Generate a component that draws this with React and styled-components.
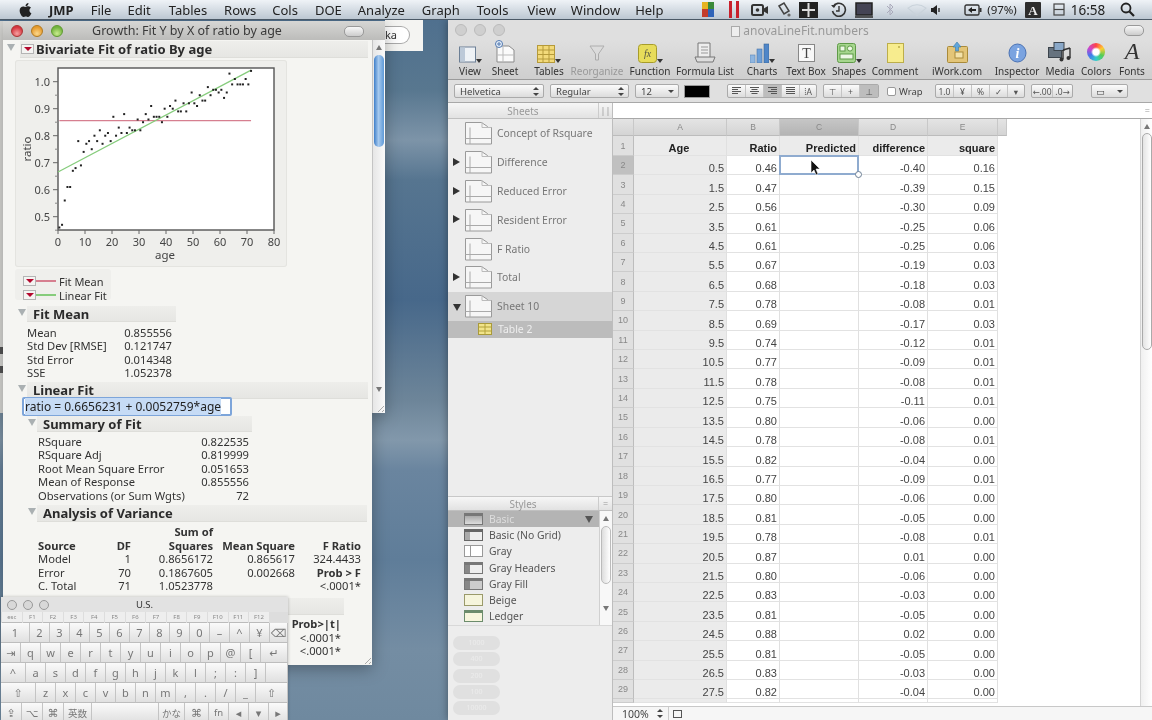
import React from "react";
import styled, { createGlobalStyle } from "styled-components";
import { FaApple } from "react-icons/fa";

const GlobalStyle = createGlobalStyle`
  html, body {
    margin: 0;
    width: 1152px;
    height: 720px;
    overflow: hidden;
    background: #5d7a96;
  }
`;

const sans = `"Noto Sans", "DejaVu Sans", "Noto Sans CJK JP", sans-serif`;
const helv = `"Liberation Sans", Arial, sans-serif`;

// ---------- data ----------
const ratios = [
  0.46, 0.47, 0.56, 0.61, 0.61, 0.67, 0.68, 0.78, 0.69, 0.74, 0.77, 0.78, 0.75, 0.8, 0.78, 0.82,
  0.77, 0.8, 0.81, 0.78, 0.87, 0.8, 0.83, 0.81, 0.88, 0.81, 0.83, 0.82, 0.82, 0.86, 0.82, 0.85,
  0.88, 0.86, 0.91, 0.87, 0.87, 0.87, 0.85, 0.9, 0.87, 0.91, 0.9, 0.93, 0.89, 0.89, 0.92, 0.89,
  0.92, 0.96, 0.92, 0.91, 0.95, 0.93, 0.93, 0.98, 0.95, 0.97, 0.97, 0.96, 0.97, 0.94, 0.96, 1.03,
  0.99, 1.01, 0.99, 0.99, 0.99, 1.01, 0.99, 1.04,
];
const differences = [
  "-0.40", "-0.39", "-0.30", "-0.25", "-0.25", "-0.19", "-0.18", "-0.08", "-0.17", "-0.12", "-0.09",
  "-0.08", "-0.11", "-0.06", "-0.08", "-0.04", "-0.09", "-0.06", "-0.05", "-0.08", "0.01", "-0.06",
  "-0.03", "-0.05", "0.02", "-0.05", "-0.03", "-0.04",
];
const squares = [
  "0.16", "0.15", "0.09", "0.06", "0.06", "0.03", "0.03", "0.01", "0.03", "0.01", "0.01", "0.01",
  "0.01", "0.00", "0.01", "0.00", "0.01", "0.00", "0.00", "0.01", "0.00", "0.00", "0.00", "0.00",
  "0.00", "0.00", "0.00", "0.00",
];
const menus = [
  ["File", 16],
  ["Edit", 18],
  ["Tables", 17],
  ["Rows", 16],
  ["Cols", 17],
  ["DOE", 16],
  ["Analyze", 17],
  ["Graph", 17],
  ["Tools", 19],
  ["View", 15],
  ["Window", 15],
  ["Help", 0],
];

// ---------- page ----------
const Desktop = styled.div`
  position: relative;
  width: 1152px;
  height: 720px;
  overflow: hidden;
  filter: blur(0.45px);
  background: linear-gradient(
    180deg,
    #4d6e8e 0,
    #58778f 90px,
    #7d94a8 140px,
    #567590 180px,
    #47688a 300px,
    #6d8599 400px,
    #8298ab 440px,
    #6a859f 470px,
    #5f7d99 560px,
    #748da3 650px,
    #6f899f 720px
  );
`;

const MenuBar = styled.div`
  position: relative;
  z-index: 9;
  height: 20px;
  display: flex;
  align-items: center;
  padding-left: 18px;
  box-sizing: border-box;
  background: linear-gradient(180deg, #eff3f7, #bcc7d2);
  border-bottom: 1px solid #4a5866;
  font: 13px ${sans};
  color: #222;
`;
const AppleMark = styled(FaApple)`
  width: 15px;
  height: 16px;
  color: #222;
  margin-right: 16px;
`;
const AppName = styled.span`
  font-weight: 700;
  margin-right: 17px;
`;
const MenuItem = styled.span`
  margin-right: ${(p) => p.$gap}px;
`;
const StatusArea = styled.div`
  position: absolute;
  left: 695px;
  top: 0;
  height: 19px;
  display: flex;
  align-items: center;
`;
const Slot = styled.div`
  width: ${(p) => p.$w}px;
  margin-left: ${(p) => p.$ml || 0}px;
  display: flex;
  justify-content: center;
  align-items: center;
  white-space: nowrap;
  font-size: ${(p) => p.$size || 13}px;
`;

// ---------- behind windows ----------
const BackStrip = styled.div`
  position: absolute;
  left: 0;
  top: 21px;
  width: 4px;
  height: 392px;
  background: #d9d9d6;
  display: flex;
  flex-direction: column;
  justify-content: flex-end;
  gap: 12px;
  padding-bottom: 40px;
  box-sizing: border-box;
`;
const BackTick = styled.i`
  display: block;
  width: 3px;
  height: 7px;
  background: #555;
`;
const SmallWindow = styled.div`
  position: absolute;
  left: 385px;
  top: 20px;
  width: 38px;
  height: 31px;
  background: #f4f4f2;
  display: flex;
  padding-top: 6px;
  box-sizing: border-box;
`;
const KaButton = styled.div`
  width: 24px;
  height: 16px;
  border: 1px solid #aaa;
  border-left: none;
  border-radius: 0 9px 9px 0;
  background: #fff;
  font: 11px ${sans};
  line-height: 16px;
  color: #333;
`;

// ---------- JMP report window ----------
const ReportWindow = styled.div`
  position: absolute;
  left: 3px;
  top: 21px;
  width: 382px;
  z-index: 2;
  filter: drop-shadow(0 4px 8px rgba(0, 0, 0, 0.3));
`;
const ReportTitle = styled.div`
  height: 19px;
  position: relative;
  display: flex;
  align-items: center;
  padding-left: 8px;
  gap: 8px;
  background: linear-gradient(180deg, #d6d6d4, #bcbcba);
  font: 12.5px ${sans};
  color: #3a3a3a;
`;
const TitleText = styled.div`
  position: absolute;
  left: ${(p) => p.$left}px;
  right: ${(p) => p.$right || 0}px;
  text-align: center;
  white-space: nowrap;
  color: ${(p) => p.$color || "inherit"};
`;
const Light = styled.span`
  width: 12px;
  height: 12px;
  border-radius: 50%;
  background: radial-gradient(circle at 50% 75%, ${(p) => p.$hi}, ${(p) => p.$c} 70%);
  border: 1px solid ${(p) => p.$edge};
  box-sizing: border-box;
`;
const WindowPill = styled.span`
  position: absolute;
  right: ${(p) => p.$right}px;
  top: 5px;
  width: 18px;
  height: 9px;
  border-radius: 5px;
  border: 1px solid #999;
  background: linear-gradient(180deg, #f8f8f8, #ccc);
`;
const ReportBody = styled.div`
  display: flex;
  align-items: flex-start;
`;
const Pane = styled.div`
  position: relative;
  width: 369px;
  height: 625px;
  background: #f5f5f2;
  font: 11.2px/15px ${sans};
  color: #333;
  padding-top: 1px;
  box-sizing: border-box;
`;
const Scroll = styled.div`
  position: relative;
  width: 13px;
  height: 373px;
  background: linear-gradient(90deg, #e6e6e6, #fafafa);
  border-left: 1px solid #c4c4c4;
  box-sizing: border-box;
  display: flex;
  flex-direction: column;
  align-items: center;
`;
const ScrollArrow = styled.div`
  width: 0;
  height: 0;
  border-left: 3px solid transparent;
  border-right: 3px solid transparent;
  ${(p) => (p.$down ? "border-top: 5px solid #777;" : "border-bottom: 5px solid #777;")}
  margin-top: ${(p) => p.$mt}px;
`;
const ScrollThumb = styled.div`
  width: 10px;
  height: 92px;
  margin-top: 5px;
  border-radius: 5px;
  background: linear-gradient(90deg, #3f7fc9, #a6c9ee 45%, #5e9ad8);
`;
const Grip = styled.div`
  position: absolute;
  right: ${(p) => p.$r || 1}px;
  bottom: 1px;
  width: 9px;
  height: 9px;
  background: repeating-linear-gradient(135deg, transparent 0 2px, #aaa 2px 3px);
  clip-path: polygon(100% 0, 100% 100%, 0 100%);
`;
const Disclosure = styled.span`
  flex: none;
  width: 0;
  height: 0;
  border-left: 4px solid transparent;
  border-right: 4px solid transparent;
  border-top: 7px solid #aab0b2;
  margin-top: 3px;
`;
const HeadRow = styled.div`
  display: flex;
  margin-top: ${(p) => p.$mt || 0}px;
  padding-left: ${(p) => p.$left}px;
  gap: ${(p) => p.$gap || 1}px;
`;
const HeadBar = styled.div`
  width: ${(p) => p.$w}px;
  height: ${(p) => p.$h || 16}px;
  display: flex;
  align-items: center;
  gap: 2px;
  padding-left: ${(p) => p.$pad ?? 6}px;
  box-sizing: border-box;
  background: linear-gradient(180deg, #eeeeeb, #e6e6e3);
  border-bottom: 1px solid #dededa;
  font: 700 13px ${sans};
  color: #2b2b2b;
  white-space: nowrap;
`;
const RedMenu = styled.span`
  flex: none;
  width: 13px;
  height: 10px;
  background: #f4f4f2;
  border: 1px solid #b4b4b4;
  box-sizing: border-box;
  display: flex;
  justify-content: center;
  align-items: center;
  &::after {
    content: "";
    border-left: 4px solid transparent;
    border-right: 4px solid transparent;
    border-top: 4px solid #b3082d;
  }
`;
const PlotPanel = styled.div`
  margin: 2px 0 0 12px;
  width: 272px;
  height: 207px;
  background: #efefec;
  border-radius: 3px;
  box-shadow: inset 0 0 0 1px #e4e4e0;
`;
const PlotSvg = styled.svg`
  display: block;
`;
const LegendPanel = styled.div`
  margin: 2px 0 0 12px;
  width: 96px;
  height: 31px;
  background: #efefec;
  border-radius: 3px;
  padding: 5px 0 0 8px;
  box-sizing: border-box;
  font-size: 11px;
`;
const LegendRow = styled.div`
  display: flex;
  align-items: center;
  height: 14px;
`;
const LegendLine = styled.span`
  width: 20px;
  height: 1.5px;
  background: ${(p) => p.$c};
  margin-right: 3px;
`;
const StatTable = styled.div`
  margin: ${(p) => p.$mt || 0}px 0 0 ${(p) => p.$left}px;
  width: ${(p) => p.$w}px;
`;
const StatRow = styled.div`
  display: flex;
  justify-content: space-between;
  height: 13.5px;
  white-space: nowrap;
`;
const EquationBox = styled.div`
  position: relative;
  z-index: 1;
  margin: -2px 0 0 19px;
  width: 210px;
  height: 19px;
  background: #fff;
  border: 2px solid #7da5da;
  border-radius: 2px;
  box-sizing: border-box;
  padding-left: 1px;
  font-size: 12px;
  line-height: 15px;
  color: #222;
  white-space: nowrap;
`;
const Selected = styled.span`
  background: #c6dbf5;
`;
const AnovaGrid = styled.div`
  margin: ${(p) => p.$mt}px 0 0 35px;
  display: grid;
  grid-template-columns: 70px 23px 82px 82px 66px;
  grid-auto-rows: 13.5px;
  white-space: nowrap;
`;
const Cell = styled.div`
  text-align: ${(p) => (p.$left ? "left" : "right")};
  font-weight: ${(p) => (p.$bold ? 700 : 400)};
`;
const TailRow = styled.div`
  width: 338px;
  text-align: right;
  height: 13.5px;
  margin-top: ${(p) => p.$mt || 0}px;
  font-weight: ${(p) => (p.$bold ? 700 : 400)};
`;

// ---------- keyboard ----------
const Keyboard = styled.div`
  position: absolute;
  left: 1px;
  top: 597px;
  width: 287px;
  height: 123px;
  z-index: 5;
  background: #ececec;
  box-shadow: 0 0 3px rgba(0, 0, 0, 0.25);
  font: 10px ${sans};
  color: #777;
  overflow: hidden;
`;
const KeyboardTitle = styled.div`
  position: relative;
  height: 15px;
  display: flex;
  align-items: center;
  padding-left: 6px;
  gap: 6px;
  background: #e2e2e2;
  font-size: 9.5px;
  color: #333;
`;
const OpenLight = styled.span`
  width: 10px;
  height: 10px;
  border-radius: 50%;
  background: #d8d8d8;
  border: 1px solid #999;
  box-sizing: border-box;
`;
const FnRow = styled.div`
  height: 11px;
  display: flex;
  padding-left: 1px;
  background: #ddd;
  gap: 1px;
`;
const FnKey = styled.span`
  width: 19.6px;
  font-size: 6px;
  line-height: 10px;
  text-align: center;
  color: #888;
  background: #eee;
  border-bottom: 1px solid #bbb;
  box-sizing: border-box;
`;
const KeyRow = styled.div`
  height: 20px;
  display: flex;
`;
const Key = styled.span`
  flex: none;
  width: ${(p) => p.$w}px;
  height: 20px;
  box-sizing: border-box;
  display: flex;
  align-items: center;
  justify-content: center;
  font-size: ${(p) => p.$size || 11}px;
  background: linear-gradient(180deg, #fafafa, #e0e0e0);
  border-right: 1px solid #c4c4c4;
  border-bottom: 1px solid #bdbdbd;
`;

// ---------- Numbers window ----------
const NumbersWindow = styled.div`
  position: absolute;
  left: 448px;
  top: 20px;
  width: 704px;
  height: 700px;
  z-index: 3;
  background: #ececec;
  box-shadow: 0 0 8px rgba(0, 0, 0, 0.4);
  display: flex;
  flex-direction: column;
`;
const NumbersTitle = styled.div`
  flex: none;
  position: relative;
  height: 20px;
  display: flex;
  align-items: center;
  padding-left: 7px;
  gap: 7px;
  background: #dfdfdf;
  font: 12px ${sans};
`;
const GrayLight = styled.span`
  width: 12px;
  height: 12px;
  border-radius: 50%;
  background: #cfcfcf;
  border: 1px solid #bbb;
  box-sizing: border-box;
`;
const TitleDoc = styled.span`
  display: inline-block;
  width: 9px;
  height: 11px;
  margin-right: 3px;
  vertical-align: -2px;
  border: 1px solid #aaa;
  background: #eee;
  box-sizing: border-box;
`;
const Toolbar = styled.div`
  flex: none;
  height: 40px;
  display: flex;
  padding-left: 4px;
  background: linear-gradient(180deg, #dfdfdf, #cecece);
  border-bottom: 1px solid #9a9a9a;
  box-sizing: border-box;
`;
const Tool = styled.div`
  flex: none;
  width: ${(p) => p.$w}px;
  margin-left: ${(p) => p.$ml || 0}px;
  display: flex;
  flex-direction: column;
  align-items: center;
  font: 10px ${sans};
  color: ${(p) => (p.$off ? "#999" : "#333")};
  white-space: nowrap;
`;
const ToolIcon = styled.div`
  height: 23px;
  display: flex;
  align-items: flex-end;
  justify-content: center;
`;
const ToolLabel = styled.div`
  margin-top: 1px;
  line-height: 14px;
`;
const ColorWheel = styled.span`
  width: 18px;
  height: 18px;
  margin-bottom: 2px;
  border-radius: 50%;
  background: radial-gradient(circle, #fff 0 3px, transparent 5px),
    conic-gradient(#f44, #fc3, #5c5, #3cc, #47e, #c4c, #f44);
`;
const FontsGlyph = styled.span`
  font: italic 24px/24px "Liberation Serif", serif;
  color: #333;
`;
const FormatBar = styled.div`
  flex: none;
  height: 23px;
  display: flex;
  align-items: center;
  padding-left: 6px;
  background: #e0e0e0;
  border-bottom: 1px solid #a8a8a8;
  box-sizing: border-box;
`;
const Ctl = styled.div`
  flex: none;
  position: relative;
  width: ${(p) => p.$w}px;
  margin-left: ${(p) => p.$ml || 0}px;
  height: 14px;
  box-sizing: border-box;
  display: flex;
  align-items: center;
  font: 9.5px ${sans};
  color: #444;
  background: linear-gradient(180deg, #fbfbfb, #dcdcdc);
  border: 1px solid #aaa;
  border-radius: 2px;
  padding-left: ${(p) => p.$pad ?? 5}px;
  white-space: nowrap;
`;
const Stepper = styled.span`
  position: ${(p) => (p.$flow ? "static" : "absolute")};
  right: 4px;
  top: 2px;
  width: 6px;
  height: 9px;
  display: flex;
  flex-direction: column;
  justify-content: ${(p) => (p.$single ? "center" : "space-between")};
  align-items: center;
  &::before {
    content: "";
    display: ${(p) => (p.$single ? "none" : "block")};
    border-left: 3px solid transparent;
    border-right: 3px solid transparent;
    border-bottom: 3px solid #444;
  }
  &::after {
    content: "";
    display: block;
    border-left: 3px solid transparent;
    border-right: 3px solid transparent;
    border-top: 3px solid #444;
  }
`;
const Swatch = styled.div`
  flex: none;
  width: 26px;
  height: 13px;
  margin-left: 5px;
  background: #000;
  border: 1px solid #999;
  box-sizing: border-box;
`;
const Segmented = styled.div`
  flex: none;
  display: flex;
  margin-left: ${(p) => p.$ml}px;
  height: 14px;
  border: 1px solid #aaa;
  border-radius: 2px;
  box-sizing: border-box;
  background: linear-gradient(180deg, #fbfbfb, #dcdcdc);
`;
const Seg = styled.div`
  width: ${(p) => p.$w}px;
  box-sizing: border-box;
  display: flex;
  align-items: center;
  justify-content: center;
  font: 8.5px ${sans};
  color: #555;
  white-space: nowrap;
  border-right: 1px solid #c4c4c4;
  background: ${(p) => (p.$on ? "#bdbdbd" : "transparent")};
  &:last-child {
    border-right: none;
  }
`;
const CheckWrap = styled.div`
  flex: none;
  margin-left: 8px;
  display: flex;
  align-items: center;
  gap: 3px;
  font: 9.5px ${sans};
  color: #444;
  width: 40px;
`;
const CheckBox = styled.span`
  width: 9px;
  height: 9px;
  background: #fff;
  border: 1px solid #999;
  border-radius: 2px;
  box-sizing: border-box;
`;
const Main = styled.div`
  flex: 1;
  min-height: 0;
  display: flex;
`;
const Sidebar = styled.div`
  flex: none;
  width: 165px;
  display: flex;
  flex-direction: column;
  background: #ededed;
  border-right: 1px solid #bdbdbd;
  box-sizing: border-box;
  font: 10.4px ${sans};
  color: #777;
`;
const PanelHead = styled.div`
  flex: none;
  height: ${(p) => p.$h}px;
  display: flex;
  align-items: center;
  background: linear-gradient(180deg, #f6f6f6, #e2e2e2);
  border-top: ${(p) => (p.$line ? "1px solid #c8c8c8" : "none")};
  border-bottom: 1px solid #c0c0c0;
  box-sizing: border-box;
  color: #999;
  font-size: 10px;
`;
const HeadLabel = styled.div`
  flex: 1;
  text-align: center;
`;
const HeadHandle = styled.div`
  flex: none;
  width: 13px;
  align-self: stretch;
  display: flex;
  align-items: center;
  justify-content: center;
  color: #999;
  font-size: 9px;
  border-left: 1px solid #ccc;
`;
const SheetList = styled.div`
  flex: 1;
  min-height: 0;
`;
const SheetRow = styled.div`
  position: relative;
  height: 28.8px;
  display: flex;
  align-items: center;
  padding-left: 17px;
  gap: 5px;
  background: ${(p) => (p.$on ? "#d6d6d6" : "transparent")};
`;
const SheetArrow = styled.span`
  position: absolute;
  left: 5px;
  top: ${(p) => (p.$open ? 12 : 10)}px;
  width: 0;
  height: 0;
  ${(p) =>
    p.$open
      ? "border-left: 4px solid transparent; border-right: 4px solid transparent; border-top: 7px solid #333;"
      : "border-top: 4px solid transparent; border-bottom: 4px solid transparent; border-left: 7px solid #333;"}
`;
const TableRow = styled.div`
  height: 17px;
  display: flex;
  align-items: center;
  gap: 6px;
  padding-left: 30px;
  background: #bcbcbc;
  color: #eee;
`;
const StyleRows = styled.div`
  flex: none;
  height: 114px;
  display: flex;
  border-bottom: 1px solid #d8d8d8;
`;
const StyleList = styled.div`
  flex: 1;
`;
const StyleRow = styled.div`
  position: relative;
  height: 16.2px;
  display: flex;
  align-items: center;
  gap: 6px;
  padding-left: 16px;
  color: ${(p) => (p.$on ? "#ddd" : "#555")};
  background: ${(p) => (p.$on ? "#b4b4b4" : "transparent")};
`;
const StyleSwatch = styled.span`
  flex: none;
  width: 19px;
  height: 12px;
  box-sizing: border-box;
  border: 1px solid ${(p) => p.$edge};
  border-top-width: ${(p) => (p.$top ? 3 : 1)}px;
  background: ${(p) => p.$fill};
`;
const StyleCaret = styled.span`
  position: absolute;
  right: 6px;
  top: 5px;
  width: 0;
  height: 0;
  border-left: 4px solid transparent;
  border-right: 4px solid transparent;
  border-top: 7px solid #555;
`;
const MiniScroll = styled.div`
  flex: none;
  width: 13px;
  background: #f8f8f8;
  border-left: 1px solid #d0d0d0;
  box-sizing: border-box;
  display: flex;
  flex-direction: column;
  align-items: center;
`;
const MiniThumb = styled.div`
  width: 10px;
  height: 58px;
  margin-top: 5px;
  border-radius: 5px;
  background: linear-gradient(90deg, #ddd, #fff);
  border: 1px solid #bbb;
  box-sizing: border-box;
`;
const PillStack = styled.div`
  flex: none;
  height: 94px;
  box-sizing: border-box;
  display: flex;
  flex-direction: column;
  gap: 2.3px;
  padding: 10px 0 0 5px;
`;
const GhostPill = styled.div`
  width: 47px;
  height: 14px;
  border-radius: 7px;
  background: #e0e0e0;
  color: #ececec;
  font-size: 7px;
  line-height: 14px;
  text-align: center;
`;
const SheetArea = styled.div`
  flex: 1;
  min-width: 0;
  display: flex;
  flex-direction: column;
  background: #fff;
`;
const TableWrap = styled.div`
  flex: 1;
  min-height: 0;
  display: flex;
`;
const Grid = styled.div`
  flex: 1;
  min-width: 0;
  overflow: hidden;
  font: 11px ${helv};
  color: #333;
`;
const GridRow = styled.div`
  display: grid;
  grid-template-columns: 21px 93px 53px 79px 69px 70px 9px;
  height: ${(p) => p.$h}px;
`;
const ColHead = styled.div`
  display: flex;
  align-items: center;
  justify-content: center;
  font-size: 8.5px;
  color: #888;
  background: ${(p) =>
    p.$on ? "linear-gradient(180deg, #c6c6c6, #b4b4b4)" : "linear-gradient(180deg, #e4e4e4, #d4d4d4)"};
  border-right: 1px solid #c8c8c8;
  border-bottom: 1px solid #bcbcbc;
  box-sizing: border-box;
`;
const RowHead = styled.div`
  display: flex;
  align-items: center;
  justify-content: center;
  font-size: 9px;
  color: #888;
  background: ${(p) => (p.$on ? "#c0c0c0" : "#e0e0e0")};
  border-right: 1px solid #bdbdbd;
  border-bottom: 1px solid #ccc;
  box-sizing: border-box;
`;
const DataCell = styled.div`
  position: relative;
  display: flex;
  align-items: flex-end;
  padding: 0 2px ${(p) => (p.$bold ? 1 : 0)}px 0;
  box-sizing: border-box;
  background: ${(p) => (p.$head ? "#ebebeb" : "#fff")};
  border-right: 1px solid #e0e0e0;
  border-bottom: 1px solid #e2e2e2;
  font-weight: ${(p) => (p.$bold ? 700 : 400)};
  color: ${(p) => (p.$bold ? "#222" : "#444")};
  justify-content: ${(p) => (p.$center ? "center" : "flex-end")};
`;
const CellFocus = styled.div`
  position: absolute;
  z-index: 3;
  inset: -1px -1px -1px -1px;
  border: 2px solid #8fabcf;
  pointer-events: none;
  &::after {
    content: "";
    position: absolute;
    right: -5px;
    bottom: -5px;
    width: 5px;
    height: 5px;
    border: 1px solid #6c7f95;
    border-radius: 50%;
    background: #fff;
  }
`;
const Cursor = styled.svg`
  position: absolute;
  left: 30px;
  top: 4px;
  z-index: 4;
`;
const RightScroll = styled.div`
  flex: none;
  width: 12px;
  background: linear-gradient(90deg, #f0f0f0, #fff);
  border-left: 1px solid #d4d4d4;
  box-sizing: border-box;
  display: flex;
  flex-direction: column;
  align-items: center;
`;
const RightThumb = styled.div`
  width: 10px;
  height: 217px;
  margin-top: 4px;
  border-radius: 5px;
  background: linear-gradient(90deg, #e4e4e4, #fff);
  border: 1px solid #aaa;
  box-sizing: border-box;
`;
const FormulaBar = styled.div`
  flex: none;
  height: 16px;
  background: #fff;
  border-bottom: 1px solid #a8a8a8;
  box-sizing: border-box;
  display: flex;
  justify-content: flex-end;
  align-items: center;
  padding-right: 2px;
  color: #999;
  font: 9px ${sans};
`;
const StatusBar = styled.div`
  flex: none;
  height: 14px;
  display: flex;
  align-items: center;
  background: #f6f6f6;
  border-top: 1px solid #c8c8c8;
  box-sizing: border-box;
  font: 10.5px ${sans};
  color: #444;
`;
const ZoomBox = styled.div`
  width: 56px;
  display: flex;
  align-items: center;
  justify-content: space-between;
  padding: 0 5px 0 9px;
  box-sizing: border-box;
  border-right: 1px solid #ccc;
`;
const PageGlyph = styled.span`
  width: 9px;
  height: 8px;
  margin-left: 4px;
  border: 1px solid #555;
  box-sizing: border-box;
`;

// ---------- small drawings ----------
const MultiFlag = () => (
  <svg width="16" height="17" viewBox="0 0 16 17">
    <rect x="2" y="1" width="6" height="7" fill="#e6b422" />
    <rect x="8" y="1" width="6" height="7" fill="#3a8a3a" />
    <rect x="2" y="8" width="6" height="8" fill="#c43c2c" />
    <rect x="8" y="8" width="6" height="8" fill="#2f63b8" />
  </svg>
);
const RedBars = () => (
  <svg width="12" height="17" viewBox="0 0 12 17">
    <rect x="1" y="0" width="3" height="17" fill="#c8202c" />
    <rect x="8" y="0" width="3" height="17" fill="#c8202c" />
  </svg>
);
const Camcorder = () => (
  <svg width="18" height="14" viewBox="0 0 18 14">
    <rect x="1" y="2" width="11" height="10" rx="1.5" fill="none" stroke="#333" strokeWidth="2" />
    <circle cx="6.5" cy="7" r="1.8" fill="#333" />
    <path d="M12 6l5-3v8l-5-3z" fill="#333" />
  </svg>
);
const TagIcon = () => (
  <svg width="17" height="17" viewBox="0 0 17 17">
    <path d="M3 5l5-3 5 8-5 3z" fill="none" stroke="#444" strokeWidth="1.5" />
    <circle cx="13" cy="14" r="1.6" fill="#666" />
  </svg>
);
const DarkSquare = () => (
  <svg width="19" height="16" viewBox="0 0 19 16">
    <rect width="19" height="16" fill="#222" />
    <path d="M9.5 1v14M3 8h13" stroke="#ddd" strokeWidth="2" />
  </svg>
);
const ClockBack = () => (
  <svg width="17" height="16" viewBox="0 0 17 16">
    <path d="M3 5a6.5 6.5 0 1 1 -0.5 4" fill="none" stroke="#333" strokeWidth="1.6" />
    <path d="M1 3l3 3 2-3z" fill="#333" />
    <path d="M9 4v5h-3" fill="none" stroke="#333" strokeWidth="1.4" />
  </svg>
);
const ScreenIcon = () => (
  <svg width="18" height="16" viewBox="0 0 18 16">
    <rect x="1" y="1" width="16" height="12" fill="#445" stroke="#222" strokeWidth="1.5" />
    <path d="M0 15h18" stroke="#333" strokeWidth="1.6" />
  </svg>
);
const Bluetooth = () => (
  <svg width="8" height="15" viewBox="0 0 8 15">
    <path d="M1 4l6 6-3 3V2l3 3-6 6" fill="none" stroke="#aab" strokeWidth="1" />
  </svg>
);
const Wifi = () => (
  <svg width="21" height="14" viewBox="0 0 21 14">
    <path d="M1 5Q10.5-2 20 5L10.5 13z" fill="none" stroke="#c9d2da" strokeWidth="1.2" />
  </svg>
);
const Speaker = () => (
  <svg width="10" height="10" viewBox="0 0 10 10">
    <path d="M0 3h2l4-3v10l-4-3H0z" fill="#222" />
    <path d="M8 3v4" stroke="#222" strokeWidth="1.3" />
  </svg>
);
const Battery = () => (
  <svg width="18" height="12" viewBox="0 0 18 12">
    <rect x="1" y="1" width="14" height="10" rx="1.5" fill="none" stroke="#333" strokeWidth="1.4" />
    <rect x="15.5" y="4" width="2" height="4" fill="#333" />
    <path d="M4 6l4-3v2h4v2H8v2z" fill="#222" />
  </svg>
);
const InputA = () => (
  <svg width="16" height="16" viewBox="0 0 16 16">
    <rect width="16" height="16" rx="1" fill="#2d2d2d" />
    <text x="8" y="13" fontFamily='"Liberation Serif", serif' fontWeight="700" fontSize="13" fill="#eee" textAnchor="middle">
      A
    </text>
  </svg>
);
const GridStatus = () => (
  <svg width="12" height="13" viewBox="0 0 12 13">
    <rect x="1" y="1" width="10" height="11" fill="none" stroke="#444" strokeWidth="1.2" />
    <path d="M1 6.5h10" stroke="#444" strokeWidth="1.2" />
  </svg>
);
const Magnifier = () => (
  <svg width="15" height="15" viewBox="0 0 15 15">
    <circle cx="6" cy="6" r="4.5" fill="none" stroke="#222" strokeWidth="1.8" />
    <path d="M9.5 9.5l4.5 4.5" stroke="#222" strokeWidth="2.2" />
  </svg>
);

const PageSheet = ({ w = 27, h = 24 }) => (
  <svg width={w} height={h} viewBox="0 0 27 24">
    <path d="M0.5 1.5h16l6 4v1h4v16.5h-26z" fill="#f6f6f6" stroke="#9a9a9a" />
    <path d="M17 1.5v5h9" fill="none" stroke="#bbb" />
    <path d="M5 6.5v16.5M0.5 17.5h26" stroke="#aaa" fill="none" />
  </svg>
);
const YellowGrid = ({ s = 14 }) => (
  <svg width={s} height={s - 2} viewBox="0 0 14 12">
    <rect x="0.5" y="0.5" width="13" height="11" fill="#f1e48a" stroke="#a99a3a" />
    <path d="M0.5 4h13M0.5 8h13M7 0.5v11" stroke="#b3a23a" />
  </svg>
);
const Caret = () => (
  <svg width="6" height="4" viewBox="0 0 6 4">
    <path d="M0 0h6L3 4z" fill="#333" />
  </svg>
);

const ViewIcon = () => (
  <>
    <svg width="17" height="17" viewBox="0 0 17 17">
      <rect x="0.5" y="1" width="16" height="15" fill="#eef2f6" stroke="#6c7f95" />
      <rect x="1" y="1.5" width="5" height="14" fill="#bcc9d8" />
    </svg>
    <Caret />
  </>
);
const SheetIcon = () => (
  <svg width="22" height="23" viewBox="0 0 22 23">
    <path d="M3 6h12l5 4v12H3z" fill="#fafafa" stroke="#8b8b8b" />
    <path d="M3 15h17M9 6v16" stroke="#bbb" />
    <circle cx="5" cy="4" r="3.5" fill="#e8f0fa" stroke="#5078b0" />
    <path d="M5 2v4M3 4h4" stroke="#5078b0" />
  </svg>
);
const TablesIcon = () => (
  <>
    <svg width="18" height="18" viewBox="0 0 18 18">
      <rect x="0.5" y="0.5" width="17" height="17" fill="#f3da7a" stroke="#b59a3a" />
      <path d="M0.5 5h17M0.5 9.5h17M0.5 14h17M6 0.5v17M12 0.5v17" stroke="#b59a3a" />
    </svg>
    <Caret />
  </>
);
const FunnelIcon = () => (
  <svg width="16" height="18" viewBox="0 0 16 18" opacity="0.55">
    <path d="M1 1h14L9.5 9v6h-3V9z" fill="#ddd" stroke="#888" />
  </svg>
);
const FunctionIcon = () => (
  <>
    <svg width="19" height="19" viewBox="0 0 19 19">
      <rect x="0.5" y="0.5" width="18" height="18" rx="3" fill="#e7dc5a" stroke="#a79c2a" />
      <text x="9.5" y="13" fontFamily='"Liberation Serif", serif' fontStyle="italic" fontSize="10" fill="#554" textAnchor="middle">
        fx
      </text>
    </svg>
    <Caret />
  </>
);
const FormulaListIcon = () => (
  <svg width="22" height="21" viewBox="0 0 22 21">
    <path d="M4 1h12v15H4z" fill="#eee" stroke="#777" />
    <path d="M7 5h7M7 8h7M7 11h7" stroke="#999" />
    <path d="M1 15h20l-2 5H3z" fill="#ddd" stroke="#777" />
  </svg>
);
const ChartsIcon = () => (
  <>
    <svg width="19" height="20" viewBox="0 0 19 20">
      <rect x="0" y="12" width="5" height="8" fill="#8fb6e0" stroke="#5a86b8" strokeWidth="0.6" />
      <rect x="7" y="6" width="5" height="14" fill="#6d9fd8" stroke="#4a76a8" strokeWidth="0.6" />
      <rect x="14" y="1" width="5" height="19" fill="#4f86c8" stroke="#3a6698" strokeWidth="0.6" />
    </svg>
    <Caret />
  </>
);
const TextBoxIcon = () => (
  <svg width="19" height="20" viewBox="0 0 19 20">
    <rect x="1.5" y="1.5" width="16" height="17" fill="#f8f8f8" stroke="#888" />
    <text x="9.5" y="15" fontFamily='"Liberation Serif", serif' fontSize="14" fill="#444" textAnchor="middle">
      T
    </text>
  </svg>
);
const ShapesIcon = () => (
  <>
    <svg width="19" height="20" viewBox="0 0 19 20">
      <rect x="0.5" y="0.5" width="18" height="19" rx="2" fill="#a6d68e" stroke="#5f9a48" />
      <rect x="3" y="3" width="5" height="5" fill="#eef8e6" stroke="#5f9a48" />
      <circle cx="13" cy="5.5" r="2.6" fill="#eef8e6" stroke="#5f9a48" />
      <rect x="3" y="11" width="13" height="5" fill="#eef8e6" stroke="#5f9a48" />
    </svg>
    <Caret />
  </>
);
const CommentIcon = () => (
  <svg width="17" height="20" viewBox="0 0 17 20">
    <rect x="0.5" y="0.5" width="16" height="19" fill="#f7ec8e" stroke="#bcae4a" />
    <circle cx="12" cy="4" r="1" fill="#bcae4a" />
  </svg>
);
const IWorkIcon = () => (
  <svg width="21" height="22" viewBox="0 0 21 22">
    <rect x="0.5" y="5.5" width="20" height="16" rx="1" fill="#e3c578" stroke="#a98a3a" />
    <rect x="8" y="11" width="8" height="6" fill="#f3e2aa" stroke="#a98a3a" />
    <path d="M6 6l4-5 4 5h-2.5v4h-3V6z" fill="#5fa6dc" stroke="#3a78a8" strokeWidth="0.6" />
  </svg>
);
const InspectorIcon = () => (
  <svg width="19" height="20" viewBox="0 0 19 20">
    <ellipse cx="9.5" cy="10" rx="8.5" ry="9" fill="#7aa3e0" stroke="#4a72b4" />
    <text x="9.5" y="15" fontFamily='"Liberation Serif", serif' fontStyle="italic" fontWeight="700" fontSize="14" fill="#fff" textAnchor="middle">
      i
    </text>
  </svg>
);
const MediaIcon = () => (
  <svg width="24" height="21" viewBox="0 0 24 21">
    <rect x="0.5" y="5.5" width="13" height="10" fill="#66727e" stroke="#3c444c" />
    <rect x="6" y="0.5" width="10" height="8" fill="#8aa8c8" stroke="#3c444c" />
    <path d="M15 8v9M22 6v10M15 8l7-2" fill="none" stroke="#333" strokeWidth="1.4" />
    <circle cx="13.5" cy="17.5" r="2" fill="#333" />
    <circle cx="20.5" cy="16" r="2" fill="#333" />
  </svg>
);

const tools = [
  { label: "View", w: 36, icon: <ViewIcon /> },
  { label: "Sheet", w: 34, icon: <SheetIcon /> },
  { label: "Tables", w: 42, ml: 6, icon: <TablesIcon /> },
  { label: "Reorganize", w: 54, off: true, icon: <FunnelIcon /> },
  { label: "Function", w: 50, ml: 1, icon: <FunctionIcon /> },
  { label: "Formula List", w: 60, icon: <FormulaListIcon /> },
  { label: "Charts", w: 40, ml: 7, icon: <ChartsIcon /> },
  { label: "Text Box", w: 46, ml: 1, icon: <TextBoxIcon /> },
  { label: "Shapes", w: 40, icon: <ShapesIcon /> },
  { label: "Comment", w: 50, ml: 1, icon: <CommentIcon /> },
  { label: "iWork.com", w: 54, ml: 10, icon: <IWorkIcon /> },
  { label: "Inspector", w: 50, ml: 8, icon: <InspectorIcon /> },
  { label: "Media", w: 36, icon: <MediaIcon /> },
  { label: "Colors", w: 36, icon: <ColorWheel /> },
  { label: "Fonts", w: 36, icon: <FontsGlyph>A</FontsGlyph> },
];

const AlignGlyph = ({ kind }) => {
  const rows = { left: [9, 6, 9, 6], center: [9, 6, 9, 6], right: [9, 6, 9, 6], full: [9, 9, 9, 9] }[kind];
  return (
    <svg width="9" height="8" viewBox="0 0 9 8">
      {rows.map((len, i) => {
        const x = kind === "center" ? (9 - len) / 2 : kind === "right" ? 9 - len : 0;
        return <rect key={i} x={x} y={i * 2} width={len} height="1" fill="#555" />;
      })}
    </svg>
  );
};

const Plot = () => {
  // plot box inside the panel: x 43..259, y 8..170
  const px = (a) => 43 + a * 2.7;
  const py = (r) => 21.7 + (1 - r) * 270;
  const xTicks = [0, 10, 20, 30, 40, 50, 60, 70, 80];
  const yTicks = [1, 0.9, 0.8, 0.7, 0.6, 0.5];
  return (
    <PlotSvg width="272" height="207" viewBox="0 0 272 207">
      <rect x="43" y="8" width="216" height="162" fill="#fff" stroke="#555" strokeWidth="1.4" />
      {yTicks.map((t) => (
        <g key={t}>
          <path d={`M38 ${py(t)}h5`} stroke="#666" />
          <path d={`M40 ${py(t - 0.05)}h3`} stroke="#888" />
          <text x="35" y={py(t) + 4} fontFamily={sans} fontSize="11" fill="#444" textAnchor="end">
            {t.toFixed(1)}
          </text>
        </g>
      ))}
      {xTicks.map((t) => (
        <g key={t}>
          <path d={`M${px(t)} 170v4`} stroke="#666" />
          <text x={px(t)} y="186" fontFamily={sans} fontSize="11" fill="#444" textAnchor="middle">
            {t}
          </text>
        </g>
      ))}
      <text x="150" y="199" fontFamily={sans} fontSize="11.5" fill="#444" textAnchor="middle">
        age
      </text>
      <text transform="translate(16 89) rotate(-90)" fontFamily={sans} fontSize="11.5" fill="#444" textAnchor="middle">
        ratio
      </text>
      <path d={`M${px(0.5)} ${py(0.8556)}L${px(71.5)} ${py(0.8556)}`} stroke="#d67f90" strokeWidth="1.3" />
      <path d={`M${px(0)} ${py(0.6656)}L${px(71.5)} ${py(0.6656 + 0.0052759 * 71.5)}`} stroke="#86cc7c" strokeWidth="1.3" />
      {ratios.map((r, i) => (
        <rect key={i} x={px(i + 0.5) - 1} y={py(r) - 1} width="2" height="2" fill="#222" />
      ))}
    </PlotSvg>
  );
};

const keyRows = [
  [["1", 29], ["2", 20], ["3", 20], ["4", 20], ["5", 20], ["6", 20], ["7", 20], ["8", 20], ["9", 20], ["0", 20], ["–", 20], ["^", 20], ["¥", 20], ["⌫", 18]],
  [["⇥", 20], ["q", 20], ["w", 20], ["e", 20], ["r", 20], ["t", 20], ["y", 20], ["u", 20], ["i", 20], ["o", 20], ["p", 20], ["@", 20], ["[", 20], ["↵", 27]],
  [["^", 25], ["a", 20], ["s", 20], ["d", 20], ["f", 20], ["g", 20], ["h", 20], ["j", 20], ["k", 20], ["l", 20], [";", 20], [":", 20], ["]", 20], ["", 22]],
  [["⇧", 35], ["z", 20], ["x", 20], ["c", 20], ["v", 20], ["b", 20], ["n", 20], ["m", 20], [",", 20], [".", 20], ["/", 20], ["_", 20], ["⇧", 32]],
  [["⇪", 21], ["⌥", 21], ["⌘", 21], ["英数", 28], ["", 67], ["かな", 26], ["⌘", 24], ["fn", 20], ["◂", 20], ["▾", 20], ["▸", 19]],
];
const fnKeys = ["esc", "F1", "F2", "F3", "F4", "F5", "F6", "F7", "F8", "F9", "F10", "F11", "F12"];

const styleRows = [
  { name: "Basic", on: true, fill: "linear-gradient(180deg,#aaa,#ddd)", edge: "#777", top: true },
  { name: "Basic (No Grid)", fill: "linear-gradient(90deg,#aaa 30%,#eee 30%)", edge: "#666", top: true },
  { name: "Gray", fill: "linear-gradient(90deg,#fff 30%,#999 30% 35%,#fff 35%)", edge: "#999" },
  { name: "Gray Headers", fill: "linear-gradient(90deg,#888 30%,#eee 30%)", edge: "#777", top: true },
  { name: "Gray Fill", fill: "linear-gradient(90deg,#888 30%,#ccc 30%)", edge: "#777", top: true },
  { name: "Beige", fill: "#f6f5dc", edge: "#9a9a6a" },
  { name: "Ledger", fill: "#f7f6dd", edge: "#6c8c6c", top: true },
];
const sheets = [
  { name: "Concept of Rsquare" },
  { name: "Difference", arrow: true },
  { name: "Reduced Error", arrow: true },
  { name: "Resident Error", arrow: true },
  { name: "F Ratio" },
  { name: "Total", arrow: true },
  { name: "Sheet 10", open: true, on: true },
];

const App = () => {
  const stats1 = [
    ["Mean", "0.855556"],
    ["Std Dev [RMSE]", "0.121747"],
    ["Std Error", "0.014348"],
    ["SSE", "1.052378"],
  ];
  const stats2 = [
    ["RSquare", "0.822535"],
    ["RSquare Adj", "0.819999"],
    ["Root Mean Square Error", "0.051653"],
    ["Mean of Response", "0.855556"],
    ["Observations (or Sum Wgts)", "72"],
  ];
  return (
    <Desktop>
      <GlobalStyle />
      <MenuBar>
        <AppleMark />
        <AppName>JMP</AppName>
        {menus.map(([m, gap]) => (
          <MenuItem key={m} $gap={gap}>
            {m}
          </MenuItem>
        ))}
        <StatusArea>
          <Slot $w={26}><MultiFlag /></Slot>
          <Slot $w={26}><RedBars /></Slot>
          <Slot $w={26}><Camcorder /></Slot>
          <Slot $w={23}><TagIcon /></Slot>
          <Slot $w={25}><DarkSquare /></Slot>
          <Slot $w={34}><ClockBack /></Slot>
          <Slot $w={18}><ScreenIcon /></Slot>
          <Slot $w={34}><Bluetooth /></Slot>
          <Slot $w={20}><Wifi /></Slot>
          <Slot $w={18}><Speaker /></Slot>
          <Slot $w={18} $ml={19}><Battery /></Slot>
          <Slot $w={30} $ml={5} $size={11.5}>(97%)</Slot>
          <Slot $w={18} $ml={7}><InputA /></Slot>
          <Slot $w={14} $ml={10}><GridStatus /></Slot>
          <Slot $w={34} $ml={5} $size={13.5}>16:58</Slot>
          <Slot $w={16} $ml={14}><Magnifier /></Slot>
        </StatusArea>
      </MenuBar>

      <BackStrip>
        <BackTick />
        <BackTick />
      </BackStrip>
      <SmallWindow>
        <KaButton>ka</KaButton>
      </SmallWindow>

      <ReportWindow>
        <ReportTitle>
          <Light $c="#d5353e" $hi="#f6a0a0" $edge="#a33" />
          <Light $c="#e59a2c" $hi="#fbd78a" $edge="#b27a20" />
          <Light $c="#72b33c" $hi="#c9ec8e" $edge="#5f9a30" />
          <TitleText $left={0} $right={14}>Growth: Fit Y by X of ratio by age</TitleText>
          <WindowPill $right={21} />
        </ReportTitle>
        <ReportBody>
          <Pane>
            <HeadRow $left={4} $gap={5}>
              <Disclosure />
              <HeadBar $w={348} $h={17} $pad={1}>
                <RedMenu />
                Bivariate Fit of ratio By age
              </HeadBar>
            </HeadRow>
            <PlotPanel>
              <Plot />
            </PlotPanel>
            <LegendPanel>
              <LegendRow>
                <RedMenu />
                <LegendLine $c="#d67f90" />
                Fit Mean
              </LegendRow>
              <LegendRow>
                <RedMenu />
                <LegendLine $c="#86cc7c" />
                Linear Fit
              </LegendRow>
            </LegendPanel>
            <HeadRow $left={15} $mt={6}>
              <Disclosure />
              <HeadBar $w={149}>Fit Mean</HeadBar>
            </HeadRow>
            <StatTable $left={24} $w={145} $mt={2.5}>
              {stats1.map(([k, v]) => (
                <StatRow key={k}>
                  <span>{k}</span>
                  <span>{v}</span>
                </StatRow>
              ))}
            </StatTable>
            <HeadRow $left={15} $mt={3.5}>
              <Disclosure />
              <HeadBar $w={341} $h={17}>Linear Fit</HeadBar>
            </HeadRow>
            <EquationBox>
              <Selected>ratio = 0.6656231 + 0.0052759*age</Selected>
            </EquationBox>
            <HeadRow $left={25}>
              <Disclosure />
              <HeadBar $w={215}>Summary of Fit</HeadBar>
            </HeadRow>
            <StatTable $left={35} $w={211} $mt={1.75}>
              {stats2.map(([k, v]) => (
                <StatRow key={k}>
                  <span>{k}</span>
                  <span>{v}</span>
                </StatRow>
              ))}
            </StatTable>
            <HeadRow $left={25} $mt={3.75}>
              <Disclosure />
              <HeadBar $w={330} $h={17}>Analysis of Variance</HeadBar>
            </HeadRow>
            <AnovaGrid $mt={2.25}>
              <Cell />
              <Cell />
              <Cell $bold>Sum of</Cell>
              <Cell />
              <Cell />
              <Cell $left $bold>Source</Cell>
              <Cell $bold>DF</Cell>
              <Cell $bold>Squares</Cell>
              <Cell $bold>Mean Square</Cell>
              <Cell $bold>F Ratio</Cell>
              <Cell $left>Model</Cell>
              <Cell>1</Cell>
              <Cell>0.8656172</Cell>
              <Cell>0.865617</Cell>
              <Cell>324.4433</Cell>
              <Cell $left>Error</Cell>
              <Cell>70</Cell>
              <Cell>0.1867605</Cell>
              <Cell>0.002668</Cell>
              <Cell $bold>Prob &gt; F</Cell>
              <Cell $left>C. Total</Cell>
              <Cell>71</Cell>
              <Cell>1.0523778</Cell>
              <Cell />
              <Cell>&lt;.0001*</Cell>
            </AnovaGrid>
            <HeadRow $left={25} $mt={6.25}>
              <Disclosure />
              <HeadBar $w={307} $h={17} />
            </HeadRow>
            <TailRow $bold $mt={1.25}>Prob&gt;|t|</TailRow>
            <TailRow>&lt;.0001*</TailRow>
            <TailRow>&lt;.0001*</TailRow>
            <Grip />
          </Pane>
          <Scroll>
            <ScrollArrow $mt={5} />
            <ScrollThumb />
            <ScrollArrow $down $mt={240} />
            <Grip />
          </Scroll>
        </ReportBody>
      </ReportWindow>

      <Keyboard>
        <KeyboardTitle>
          <OpenLight />
          <OpenLight />
          <OpenLight />
          <TitleText $left={0}>U.S.</TitleText>
        </KeyboardTitle>
        <FnRow>
          {fnKeys.map((k) => (
            <FnKey key={k}>{k}</FnKey>
          ))}
        </FnRow>
        {keyRows.map((row, i) => (
          <KeyRow key={i}>
            {row.map(([k, w], j) => (
              <Key key={j} $w={w} $size={k.length > 1 ? 9.5 : 11}>
                {k}
              </Key>
            ))}
          </KeyRow>
        ))}
      </Keyboard>

      <NumbersWindow>
        <NumbersTitle>
          <GrayLight />
          <GrayLight />
          <GrayLight />
          <TitleText $left={0} $color="#999">
            <TitleDoc />
            anovaLineFit.numbers
          </TitleText>
          <WindowPill $right={8} />
        </NumbersTitle>
        <Toolbar>
          {tools.map((t) => (
            <Tool key={t.label} $w={t.w} $ml={t.ml} $off={t.off}>
              <ToolIcon>{t.icon}</ToolIcon>
              <ToolLabel>{t.label}</ToolLabel>
            </Tool>
          ))}
        </Toolbar>
        <FormatBar>
          <Ctl $w={90}>
            Helvetica
            <Stepper />
          </Ctl>
          <Ctl $w={79} $ml={6}>
            Regular
            <Stepper />
          </Ctl>
          <Ctl $w={44} $ml={6}>
            12
            <Stepper $single />
          </Ctl>
          <Swatch />
          <Segmented $ml={17}>
            <Seg $w={18}><AlignGlyph kind="left" /></Seg>
            <Seg $w={18}><AlignGlyph kind="center" /></Seg>
            <Seg $w={18} $on><AlignGlyph kind="right" /></Seg>
            <Seg $w={18}><AlignGlyph kind="full" /></Seg>
            <Seg $w={16}>⁞A</Seg>
          </Segmented>
          <Segmented $ml={6}>
            <Seg $w={18}>⊤</Seg>
            <Seg $w={18}>+</Seg>
            <Seg $w={18} $on>⊥</Seg>
          </Segmented>
          <CheckWrap>
            <CheckBox />
            Wrap
          </CheckWrap>
          <Segmented $ml={8}>
            <Seg $w={18}>1.0</Seg>
            <Seg $w={18}>¥</Seg>
            <Seg $w={18}>%</Seg>
            <Seg $w={18}>✓</Seg>
            <Seg $w={16}>▾</Seg>
          </Segmented>
          <Segmented $ml={6}>
            <Seg $w={21}>←.00</Seg>
            <Seg $w={19}>.0→</Seg>
          </Segmented>
          <Ctl $w={37} $ml={18} $pad={4}>
            ▭<Stepper $single />
          </Ctl>
        </FormatBar>
        <Main>
          <Sidebar>
            <PanelHead $h={16}>
              <HeadLabel>Sheets</HeadLabel>
              <HeadHandle>||</HeadHandle>
            </PanelHead>
            <SheetList>
              {sheets.map((s) => (
                <SheetRow key={s.name} $on={s.on}>
                  {(s.arrow || s.open) && <SheetArrow $open={s.open} />}
                  <PageSheet />
                  {s.name}
                </SheetRow>
              ))}
              <TableRow>
                <YellowGrid />
                Table 2
              </TableRow>
            </SheetList>
            <PanelHead $h={15} $line>
              <HeadLabel>Styles</HeadLabel>
              <HeadHandle>=</HeadHandle>
            </PanelHead>
            <StyleRows>
              <StyleList>
                {styleRows.map((s) => (
                  <StyleRow key={s.name} $on={s.on}>
                    <StyleSwatch $fill={s.fill} $edge={s.edge} $top={s.top} />
                    {s.name}
                    {s.on && <StyleCaret />}
                  </StyleRow>
                ))}
              </StyleList>
              <MiniScroll>
                <ScrollArrow $mt={5} />
                <MiniThumb />
                <ScrollArrow $down $mt={22} />
              </MiniScroll>
            </StyleRows>
            <PillStack>
              {["1000", "400", "200", "100", "10000"].map((t) => (
                <GhostPill key={t}>{t}</GhostPill>
              ))}
            </PillStack>
          </Sidebar>
          <SheetArea>
            <FormulaBar>=</FormulaBar>
            <TableWrap>
              <Grid>
                <GridRow $h={17}>
                  <ColHead />
                  <ColHead>A</ColHead>
                  <ColHead>B</ColHead>
                  <ColHead $on>C</ColHead>
                  <ColHead>D</ColHead>
                  <ColHead>E</ColHead>
                  <ColHead />
                </GridRow>
                <GridRow $h={20}>
                  <RowHead>1</RowHead>
                  <DataCell $head $bold $center>Age</DataCell>
                  <DataCell $head $bold>Ratio</DataCell>
                  <DataCell $head $bold>Predicted</DataCell>
                  <DataCell $head $bold>difference</DataCell>
                  <DataCell $head $bold>square</DataCell>
                </GridRow>
                {differences.map((d, i) => (
                  <GridRow key={i} $h={19.42}>
                    <RowHead $on={i === 0}>{i + 2}</RowHead>
                    <DataCell $head>{(i + 0.5).toFixed(1)}</DataCell>
                    <DataCell>{ratios[i].toFixed(2)}</DataCell>
                    <DataCell>
                      {i === 0 && (
                        <>
                          <CellFocus />
                          <Cursor width="11" height="16" viewBox="0 0 11 16">
                            <path d="M1 0v13l3-3 2 5 2-1-2-5h4z" fill="#111" stroke="#fff" strokeWidth="0.6" />
                          </Cursor>
                        </>
                      )}
                    </DataCell>
                    <DataCell>{d}</DataCell>
                    <DataCell>{squares[i]}</DataCell>
                  </GridRow>
                ))}
                <GridRow $h={4}>
                  <RowHead />
                  <DataCell $head />
                  <DataCell />
                  <DataCell />
                  <DataCell />
                  <DataCell />
                </GridRow>
              </Grid>
              <RightScroll>
                <ScrollArrow $mt={5} />
                <RightThumb />
              </RightScroll>
            </TableWrap>
            <StatusBar>
              <ZoomBox>
                100%
                <Stepper $flow />
              </ZoomBox>
              <PageGlyph />
            </StatusBar>
          </SheetArea>
        </Main>
      </NumbersWindow>
    </Desktop>
  );
};

export default App;
